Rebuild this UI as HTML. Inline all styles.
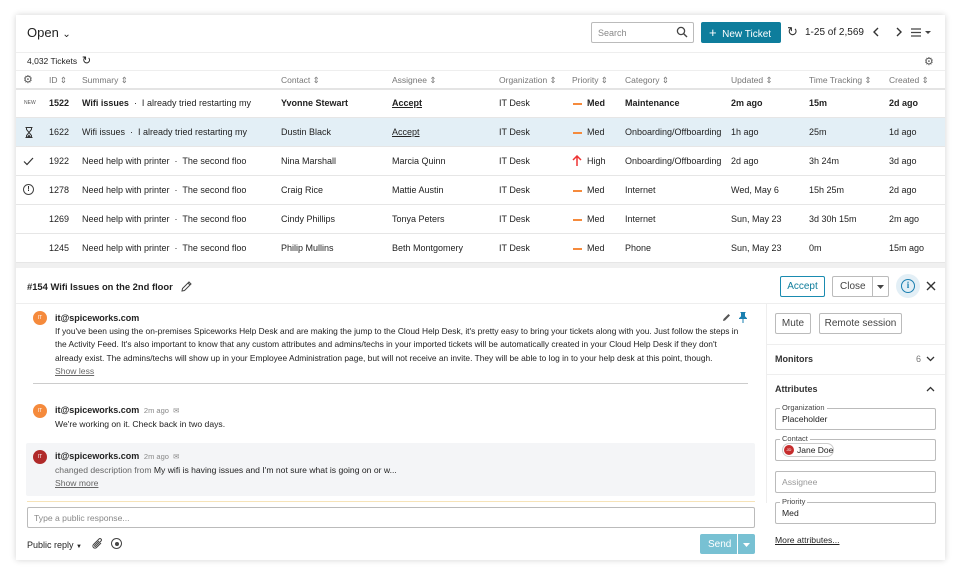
<!DOCTYPE html>
<html><head><style>
*{margin:0;padding:0;box-sizing:border-box}
body{width:960px;height:574px;background:#fff;font-family:"Liberation Sans",sans-serif;color:#222;position:relative;overflow:hidden}
.card{position:absolute;left:16px;top:15px;width:929px;height:545px;background:#fff;box-shadow:0 0 6px rgba(0,0,0,.18)}
.a{position:absolute;white-space:nowrap}
.t{font-size:9px;line-height:11px}
.h{font-size:8.5px;color:#777}
.b{font-weight:bold}
.row{position:absolute;left:16px;width:929px;border-bottom:1px solid #e6e6e6}
.dash{position:absolute;width:9px;height:2px;background:#f58a3c}
.box{position:absolute;border:1px solid #bbb;border-radius:2px;background:#fff}
.lbl{position:absolute;font-size:7.5px;color:#444;background:#fff;padding:0 2px}
.av{position:absolute;width:14px;height:14px;border-radius:50%;color:#fff;font-size:5px;text-align:center;line-height:14px}
.ln{position:absolute;left:55px;font-size:8.6px;line-height:11px;white-space:nowrap}
u{text-decoration:underline}
</style></head><body>
<div class="card"></div>
<div class="a" style="left:27px;top:25px;font-size:13px">Open <span style="font-size:10px">&#8964;</span></div>
<div class="a" style="left:16px;top:52px;width:929px;height:1px;background:#eee"></div>
<div class="box" style="left:591px;top:22px;width:103px;height:21px"></div>
<div class="a t" style="left:598px;top:28px;color:#888">Search</div>
<svg class="a" style="left:676px;top:26px" width="12" height="12" viewBox="0 0 12 12"><circle cx="5" cy="5" r="3.6" fill="none" stroke="#444" stroke-width="1.3"/><path d="M7.7 7.7L11 11" stroke="#444" stroke-width="1.4"/></svg>
<div class="a" style="left:701px;top:22px;width:80px;height:21px;background:#0e7d9c;border-radius:2px;color:#fff;font-size:10px;line-height:21px;padding-left:8px"><span style="font-size:13px">+</span>&nbsp;&nbsp;New Ticket</div>
<div class="a" style="left:787px;top:24px;font-size:13px;color:#333">&#8635;</div>
<div class="a" style="left:805px;top:27px;font-size:10px">1-25 of 2,569</div>
<svg class="a" style="left:872px;top:27px" width="8" height="10" viewBox="0 0 8 10"><path d="M6 1L2 5l4 4" fill="none" stroke="#333" stroke-width="1.4"/></svg>
<svg class="a" style="left:895px;top:27px" width="8" height="10" viewBox="0 0 8 10"><path d="M2 1l4 4-4 4" fill="none" stroke="#333" stroke-width="1.4"/></svg>
<svg class="a" style="left:911px;top:28px" width="22" height="9" viewBox="0 0 22 9"><path d="M0 1h10M0 4.5h10M0 8h10" stroke="#444" stroke-width="1.3"/><path d="M14 3h6l-3 3z" fill="#444"/></svg>
<div class="a" style="left:27px;top:56px;font-size:8.5px;line-height:11px">4,032 Tickets &nbsp;<span style="font-size:11px">&#8635;</span></div>
<div class="a" style="left:924px;top:55px;font-size:11px;color:#555">&#9881;</div>
<div class="a" style="left:16px;top:70px;width:929px;height:1px;background:#eee"></div>
<div class="a" style="left:23px;top:73px;font-size:11px;color:#555">&#9881;</div>
<div class="a h" style="left:49px;top:75px">ID &#8661;</div>
<div class="a h" style="left:82px;top:75px">Summary &#8661;</div>
<div class="a h" style="left:281px;top:75px">Contact &#8661;</div>
<div class="a h" style="left:392px;top:75px">Assignee &#8661;</div>
<div class="a h" style="left:499px;top:75px">Organization &#8661;</div>
<div class="a h" style="left:572px;top:75px">Priority &#8661;</div>
<div class="a h" style="left:625px;top:75px">Category &#8661;</div>
<div class="a h" style="left:731px;top:75px">Updated &#8661;</div>
<div class="a h" style="left:809px;top:75px">Time Tracking &#8661;</div>
<div class="a h" style="left:889px;top:75px">Created &#8661;</div>
<div class="a" style="left:16px;top:88px;width:929px;height:2px;background:#e4e4e4"></div>
<div class="row" style="top:90px;height:28px"></div>
<div class="row" style="top:118px;height:29px;background:#e3eff6"></div>
<div class="row" style="top:147px;height:29px"></div>
<div class="row" style="top:176px;height:29px"></div>
<div class="row" style="top:205px;height:29px"></div>
<div class="row" style="top:234px;height:29px"></div>

<div class="a" style="left:24px;top:100px;font-size:5px;color:#555">NEW</div>
<div class="a t b" style="left:49px;top:98px">1522</div>
<div class="a t" style="left:82px;top:98px"><b>Wifi issues</b> &nbsp;·&nbsp; I already tried restarting my</div>
<div class="a t b" style="left:281px;top:98px">Yvonne Stewart</div>
<div class="a t b" style="left:392px;top:98px"><u>Accept</u></div>
<div class="a t" style="left:499px;top:98px">IT Desk</div>
<div class="dash" style="left:573px;top:103px"></div><div class="a t b" style="left:587px;top:98px">Med</div>
<div class="a t b" style="left:625px;top:98px">Maintenance</div>
<div class="a t b" style="left:731px;top:98px">2m ago</div>
<div class="a t b" style="left:809px;top:98px">15m</div>
<div class="a t b" style="left:889px;top:98px">2d ago</div>

<svg class="a" style="left:25px;top:127px" width="8" height="11" viewBox="0 0 8 11"><path d="M0.5 0.5h7M0.5 10.5h7M1.5 0.5v2l2.5 3-2.5 3v2M6.5 0.5v2l-2.5 3 2.5 3v2" fill="none" stroke="#333" stroke-width="1"/><path d="M2 10l2-2.5 2 2.5z" fill="#333"/></svg>
<div class="a t" style="left:49px;top:127px">1622</div>
<div class="a t" style="left:82px;top:127px">Wifi issues &nbsp;·&nbsp; I already tried restarting my</div>
<div class="a t" style="left:281px;top:127px">Dustin Black</div>
<div class="a t" style="left:392px;top:127px"><u>Accept</u></div>
<div class="a t" style="left:499px;top:127px">IT Desk</div>
<div class="dash" style="left:573px;top:132px"></div><div class="a t" style="left:587px;top:127px">Med</div>
<div class="a t" style="left:625px;top:127px">Onboarding/Offboarding</div>
<div class="a t" style="left:731px;top:127px">1h ago</div>
<div class="a t" style="left:809px;top:127px">25m</div>
<div class="a t" style="left:889px;top:127px">1d ago</div>

<svg class="a" style="left:23px;top:157px" width="11" height="9" viewBox="0 0 11 9"><path d="M1 4.5l3 3L10 1" fill="none" stroke="#333" stroke-width="1.2"/></svg>
<div class="a t" style="left:49px;top:156px">1922</div>
<div class="a t" style="left:82px;top:156px">Need help with printer &nbsp;·&nbsp; The second floo</div>
<div class="a t" style="left:281px;top:156px">Nina Marshall</div>
<div class="a t" style="left:392px;top:156px">Marcia Quinn</div>
<div class="a t" style="left:499px;top:156px">IT Desk</div>
<svg class="a" style="left:572px;top:155px" width="10" height="11" viewBox="0 0 10 11"><path d="M5 11V1.5M1 5l4-4 4 4" fill="none" stroke="#e33" stroke-width="1.5"/></svg><div class="a t" style="left:587px;top:156px">High</div>
<div class="a t" style="left:625px;top:156px">Onboarding/Offboarding</div>
<div class="a t" style="left:731px;top:156px">2d ago</div>
<div class="a t" style="left:809px;top:156px">3h 24m</div>
<div class="a t" style="left:889px;top:156px">3d ago</div>

<div class="a" style="left:23px;top:184px;width:11px;height:11px;border:1px solid #444;border-radius:50%;font-size:7px;text-align:center;line-height:9px;font-weight:bold">!</div>
<div class="a t" style="left:49px;top:185px">1278</div>
<div class="a t" style="left:82px;top:185px">Need help with printer &nbsp;·&nbsp; The second floo</div>
<div class="a t" style="left:281px;top:185px">Craig Rice</div>
<div class="a t" style="left:392px;top:185px">Mattie Austin</div>
<div class="a t" style="left:499px;top:185px">IT Desk</div>
<div class="dash" style="left:573px;top:190px"></div><div class="a t" style="left:587px;top:185px">Med</div>
<div class="a t" style="left:625px;top:185px">Internet</div>
<div class="a t" style="left:731px;top:185px">Wed, May 6</div>
<div class="a t" style="left:809px;top:185px">15h 25m</div>
<div class="a t" style="left:889px;top:185px">2d ago</div>

<div class="a t" style="left:49px;top:214px">1269</div>
<div class="a t" style="left:82px;top:214px">Need help with printer &nbsp;·&nbsp; The second floo</div>
<div class="a t" style="left:281px;top:214px">Cindy Phillips</div>
<div class="a t" style="left:392px;top:214px">Tonya Peters</div>
<div class="a t" style="left:499px;top:214px">IT Desk</div>
<div class="dash" style="left:573px;top:219px"></div><div class="a t" style="left:587px;top:214px">Med</div>
<div class="a t" style="left:625px;top:214px">Internet</div>
<div class="a t" style="left:731px;top:214px">Sun, May 23</div>
<div class="a t" style="left:809px;top:214px">3d 30h 15m</div>
<div class="a t" style="left:889px;top:214px">2m ago</div>

<div class="a t" style="left:49px;top:243px">1245</div>
<div class="a t" style="left:82px;top:243px">Need help with printer &nbsp;·&nbsp; The second floo</div>
<div class="a t" style="left:281px;top:243px">Philip Mullins</div>
<div class="a t" style="left:392px;top:243px">Beth Montgomery</div>
<div class="a t" style="left:499px;top:243px">IT Desk</div>
<div class="dash" style="left:573px;top:248px"></div><div class="a t" style="left:587px;top:243px">Med</div>
<div class="a t" style="left:625px;top:243px">Phone</div>
<div class="a t" style="left:731px;top:243px">Sun, May 23</div>
<div class="a t" style="left:809px;top:243px">0m</div>
<div class="a t" style="left:889px;top:243px">15m ago</div>

<div class="a" style="left:16px;top:263px;width:929px;height:5px;background:#f0f0f0"></div>
<div class="a b" style="left:27px;top:281px;font-size:9.4px">#154 Wifi Issues on the 2nd floor</div>
<svg class="a" style="left:181px;top:281px" width="11" height="11" viewBox="0 0 11 11"><path d="M1 10l0.5-2.5L8 1l2 2-6.5 6.5z M7 2l2 2" fill="none" stroke="#444" stroke-width="1"/></svg>
<div class="a" style="left:780px;top:276px;width:45px;height:21px;border:1px solid #1a8bb0;border-radius:2px;color:#0e7d9c;font-size:10px;text-align:center;line-height:20px">Accept</div>
<div class="a" style="left:832px;top:276px;width:57px;height:21px;border:1px solid #bbb;border-radius:2px"></div>
<div class="a" style="left:872px;top:276px;width:1px;height:21px;background:#bbb"></div>
<div class="a" style="left:840px;top:281px;font-size:10px;color:#444">Close</div>
<svg class="a" style="left:877px;top:285px" width="7" height="4" viewBox="0 0 7 4"><path d="M0 0h7L3.5 4z" fill="#444"/></svg>
<div class="a" style="left:896px;top:274px;width:24px;height:24px;border-radius:50%;background:#e3eff6"></div>
<div class="a" style="left:901px;top:279px;width:14px;height:14px;border:1.5px solid #1a7fb0;border-radius:50%;color:#1a7fb0;font-size:9px;text-align:center;line-height:11px;font-weight:bold;font-family:'Liberation Serif',serif">i</div>
<svg class="a" style="left:926px;top:281px" width="10" height="10" viewBox="0 0 10 10"><path d="M1 1l8 8M9 1l-8 8" stroke="#333" stroke-width="1.4"/></svg>
<div class="a" style="left:16px;top:303px;width:929px;height:1px;background:#eee"></div>
<div class="a" style="left:766px;top:303px;width:1px;height:200px;background:#eee"></div>
<div class="av" style="left:33px;top:311px;background:#f58a3c">IT</div>
<div class="a t b" style="left:55px;top:313px">it@spiceworks.com</div>
<svg class="a" style="left:722px;top:313px" width="9" height="9" viewBox="0 0 9 9"><path d="M1 8l0.5-2L6.5 1l1.5 1.5-5 5z" fill="#555"/></svg>
<svg class="a" style="left:739px;top:312px" width="8" height="11" viewBox="0 0 8 11"><path d="M1.5 0.5h5M2.5 0.5v4L0.5 6.5h7L5.5 4.5v-4M4 6.5V11" fill="#1a7fb0" stroke="#1a7fb0" stroke-width="1"/></svg>
<div class="ln" style="top:326px;font-size:8.4px">If you've been using the on-premises Spiceworks Help Desk and are making the jump to the Cloud Help Desk, it's pretty easy to bring your tickets along with you. Just follow the steps in</div>
<div class="ln" style="top:339px;font-size:8.4px">the Activity Feed. It's also important to know that any custom attributes and admins/techs in your imported tickets will be automatically created in your Cloud Help Desk if they don't</div>
<div class="ln" style="top:353px;font-size:8.4px">already exist. The admins/techs will show up in your Employee Administration page, but will not receive an invite. They will be able to log in to your help desk at this point, though.</div>
<div class="ln" style="top:366px;color:#666"><u>Show less</u></div>
<div class="a" style="left:33px;top:383px;width:715px;height:1px;background:#ccc"></div>
<div class="av" style="left:33px;top:404px;background:#f58a3c">IT</div>
<div class="a t" style="left:55px;top:405px"><b>it@spiceworks.com</b> <span style="font-size:7.5px;color:#888">&nbsp;2m ago &nbsp;&#9993;</span></div>
<div class="ln" style="top:419px">We're working on it. Check back in two days.</div>
<div class="a" style="left:26px;top:443px;width:729px;height:53px;background:#f4f5f7;border-radius:2px"></div>
<div class="av" style="left:33px;top:450px;background:#b02a2a">IT</div>
<div class="a t" style="left:55px;top:451px"><b>it@spiceworks.com</b> <span style="font-size:7.5px;color:#888">&nbsp;2m ago &nbsp;&#9993;</span></div>
<div class="ln" style="top:465px"><span style="color:#666">changed description from</span> My wifi is having issues and I'm not sure what is going on or w...</div>
<div class="ln" style="top:478px;color:#666"><u>Show more</u></div>
<div class="a" style="left:27px;top:501px;width:728px;height:1px;background:#f6e3b8"></div>
<div class="box" style="left:27px;top:507px;width:728px;height:21px"></div>
<div class="a" style="left:34px;top:513px;color:#888;font-size:8.6px">Type a public response...</div>
<div class="a" style="left:27px;top:540px;font-size:9px">Public reply <span style="font-size:6px">&#9660;</span></div>
<svg class="a" style="left:92px;top:538px" width="11" height="12" viewBox="0 0 11 12"><path d="M9 5L4.5 9.5a2 2 0 0 1-3-3L7 1a1.4 1.4 0 0 1 2 2L3.8 8.2a0.7 0.7 0 0 1-1-1L7 3" fill="none" stroke="#444" stroke-width="1"/></svg>
<div class="a" style="left:111px;top:538px;width:11px;height:11px;border:1.3px solid #444;border-radius:50%"></div>
<div class="a" style="left:114.5px;top:541.5px;width:4px;height:4px;background:#444;border-radius:50%"></div>
<div class="a" style="left:700px;top:534px;width:55px;height:20px;background:#78c1d3;border-radius:2px"></div>
<div class="a" style="left:737px;top:534px;width:1px;height:20px;background:#fff"></div>
<div class="a" style="left:708px;top:539px;font-size:10px;color:#fff;line-height:12px">Send</div>
<svg class="a" style="left:743px;top:543px" width="7" height="4" viewBox="0 0 7 4"><path d="M0 0h7L3.5 4z" fill="#fff"/></svg>
<div class="a" style="left:775px;top:313px;width:36px;height:21px;border:1px solid #bbb;border-radius:2px;font-size:10px;color:#444;text-align:center;line-height:20px">Mute</div>
<div class="a" style="left:819px;top:313px;width:83px;height:21px;border:1px solid #bbb;border-radius:2px;font-size:10px;color:#444;text-align:center;line-height:20px">Remote session</div>
<div class="a" style="left:767px;top:344px;width:178px;height:1px;background:#eee"></div>
<div class="a t b" style="left:775px;top:354px;color:#333">Monitors</div>
<div class="a t" style="left:916px;top:354px;color:#777">6</div>
<svg class="a" style="left:926px;top:356px" width="9" height="6" viewBox="0 0 9 6"><path d="M1 1l3.5 3.5L8 1" fill="none" stroke="#333" stroke-width="1.3"/></svg>
<div class="a" style="left:767px;top:374px;width:178px;height:1px;background:#eee"></div>
<div class="a t b" style="left:775px;top:384px;color:#333">Attributes</div>
<svg class="a" style="left:926px;top:386px" width="9" height="6" viewBox="0 0 9 6"><path d="M1 5l3.5-3.5L8 5" fill="none" stroke="#333" stroke-width="1.3"/></svg>
<div class="box" style="left:775px;top:408px;width:161px;height:22px"></div>
<div class="lbl" style="left:780px;top:403px">Organization</div>
<div class="a" style="left:782px;top:414px;font-size:8.6px">Placeholder</div>
<div class="box" style="left:775px;top:439px;width:161px;height:22px"></div>
<div class="lbl" style="left:780px;top:434px">Contact</div>
<div class="a" style="left:782px;top:443px;width:52px;height:14px;border:1px solid #ccc;border-radius:7px"></div>
<div class="av" style="left:784px;top:445px;width:10px;height:10px;background:#c62d2d;line-height:10px;font-size:4px">JD</div>
<div class="a" style="left:797px;top:445px;font-size:8.5px">Jane Doe</div>
<div class="box" style="left:775px;top:471px;width:161px;height:22px"></div>
<div class="a" style="left:782px;top:477px;color:#999;font-size:8.6px">Assignee</div>
<div class="box" style="left:775px;top:502px;width:161px;height:22px"></div>
<div class="lbl" style="left:780px;top:497px">Priority</div>
<div class="a" style="left:782px;top:508px;font-size:8.6px">Med</div>
<div class="a" style="left:775px;top:535px;font-size:8.6px"><u>More attributes...</u></div>
</body></html>
